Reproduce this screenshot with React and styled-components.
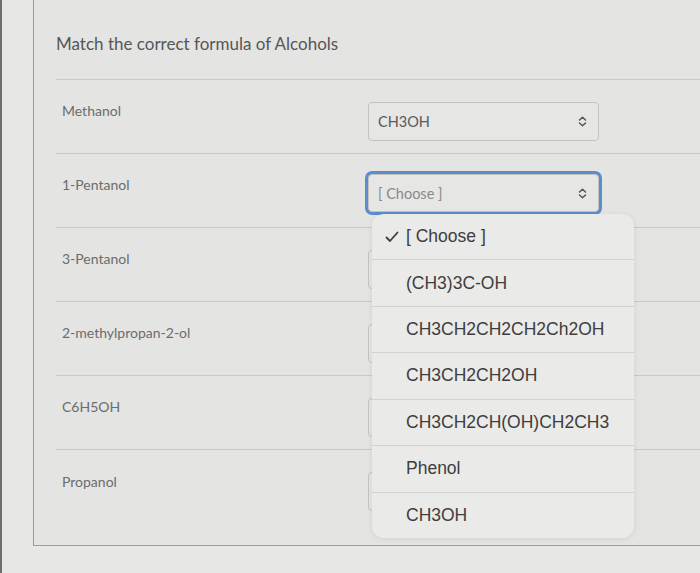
import React from "react";
import styled, { createGlobalStyle } from "styled-components";

const GlobalStyle = createGlobalStyle`
  html, body { margin: 0; padding: 0; background: #e6e6e4; }
  * { box-sizing: border-box; }
`;

const Screen = styled.div`
  position: relative;
  width: 700px;
  height: 573px;
  overflow: hidden;
  background: #e7e7e5;
  border-left: 2px solid #6e6e6c;
  padding-left: 31px;
  font-family: Lato, "Liberation Sans", sans-serif;
`;

const Panel = styled.div`
  width: 720px;
  height: 546px;
  border-left: 1px solid #9c9c9a;
  border-bottom: 1px solid #9c9c9a;
  background: #e4e4e2;
  padding-left: 22px;
  display: flex;
  flex-direction: column;
`;

const Title = styled.div`
  height: 79px;
  padding-top: 33px;
  font-size: 17px;
  color: #565656;
`;

const Row = styled.div`
  height: ${(p) => (p.$last ? "auto" : "74px")};
  flex: ${(p) => (p.$last ? 1 : "none")};
  border-top: 1.5px solid #c9c9c7;
  display: grid;
  grid-template-columns: 312px 1fr;
  align-items: start;
`;

const Label = styled.div`
  padding-left: 6px;
  padding-top: ${(p) => p.$top || 23}px;
  font-size: 14px;
  color: #6c6c6c;
`;

const Select = styled.div`
  margin-top: ${(p) => (p.$focused ? 20 : 22)}px;
  width: 231px;
  height: ${(p) => (p.$focused ? 38 : 39)}px;
  border: 1px solid #c2c2c0;
  border-radius: 4px;
  background: #e6e6e4;
  display: flex;
  align-items: center;
  justify-content: space-between;
  padding: 0 11px 0 9px;
  font-size: 14.5px;
  color: ${(p) => (p.$placeholder ? "#8a8a8a" : "#5a5a5a")};
  box-shadow: ${(p) => (p.$focused ? "0 0 0 3px #5d8ccb" : "none")};
`;

const Menu = styled.div`
  position: absolute;
  left: 370px;
  top: 214px;
  width: 262px;
  height: 324px;
  border-radius: 12px;
  background: #eaeae8;
  box-shadow: 0 1px 6px rgba(0, 0, 0, 0.08);
  display: flex;
  flex-direction: column;
  overflow: hidden;
  font-family: "Liberation Sans", Arial, sans-serif;
`;

const Item = styled.div`
  position: relative;
  flex: 1;
  display: flex;
  align-items: center;
  padding-left: 34px;
  font-size: 17.5px;
  color: #3e3e3e;
  border-top: ${(p) => (p.$first ? "none" : "1px solid #d2d2d0")};
`;

const Check = styled.span`
  position: absolute;
  left: 13px;
  top: 50%;
  transform: translateY(-50%);
  display: flex;
`;

const Chevrons = () => (
  <svg width="9" height="11" viewBox="0 0 9 11">
    <path d="M1.5 4 L4.5 1.3 L7.5 4 M1.5 7 L4.5 9.7 L7.5 7" fill="none" stroke="#555" strokeWidth="1.5" strokeLinecap="round" strokeLinejoin="round" />
  </svg>
);

const rows = [
  { label: "Methanol", value: "CH3OH" },
  { label: "1-Pentanol", value: "[ Choose ]", placeholder: true, focused: true },
  { label: "3-Pentanol", value: "[ Choose ]", placeholder: true },
  { label: "2-methylpropan-2-ol", value: "[ Choose ]", placeholder: true },
  { label: "C6H5OH", value: "[ Choose ]", placeholder: true },
  { label: "Propanol", value: "[ Choose ]", placeholder: true, last: true },
];

const options = [
  "[ Choose ]",
  "(CH3)3C-OH",
  "CH3CH2CH2CH2Ch2OH",
  "CH3CH2CH2OH",
  "CH3CH2CH(OH)CH2CH3",
  "Phenol",
  "CH3OH",
];

export default function App() {
  return (
    <>
      <GlobalStyle />
      <Screen>
        <Panel>
          <Title>Match the correct formula of Alcohols</Title>
          {rows.map((r) => (
            <Row key={r.label} $last={r.last}>
              <Label $top={r.last ? 23 : 22}>{r.label}</Label>
              <Select $placeholder={r.placeholder} $focused={r.focused}>
                <span>{r.value}</span>
                <Chevrons />
              </Select>
            </Row>
          ))}
        </Panel>
        <Menu>
          {options.map((o, i) => (
            <Item key={o} $first={i === 0}>
              {i === 0 && (
                <Check>
                  <svg width="14" height="12" viewBox="0 0 14 12">
                    <path d="M1.5 6.5 L5 10 L12.5 1.5" fill="none" stroke="#3e3e3e" strokeWidth="1.8" strokeLinecap="round" strokeLinejoin="round" />
                  </svg>
                </Check>
              )}
              {o}
            </Item>
          ))}
        </Menu>
      </Screen>
    </>
  );
}
